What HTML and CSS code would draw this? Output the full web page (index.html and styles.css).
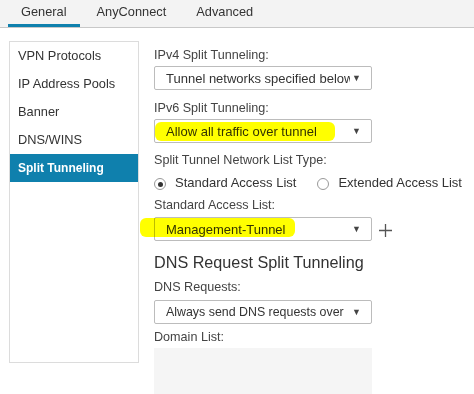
FILE: index.html
```html
<!DOCTYPE html>
<html>
<head>
<meta charset="utf-8">
<link rel="stylesheet" href="styles.css">
</head>
<body>
<div class="tabs">
  <div class="tab active">General</div>
  <div class="tab">AnyConnect</div>
  <div class="tab">Advanced</div>
</div>
<div class="main">
  <ul class="side">
    <li>VPN Protocols</li>
    <li>IP Address Pools</li>
    <li>Banner</li>
    <li>DNS/WINS</li>
    <li class="sel">Split Tunneling</li>
  </ul>
  <div class="content">
    <div class="label l1">IPv4 Split Tunneling:</div>
    <div class="select"><span class="val">Tunnel networks specified below</span><span class="arrow">&#9660;</span></div>
    <div class="label l2">IPv6 Split Tunneling:</div>
    <div class="select"><span class="val">Allow all traffic over tunnel</span><span class="arrow">&#9660;</span></div>
    <div class="label l3">Split Tunnel Network List Type:</div>
    <div class="radios">
      <span class="radio on"></span><span class="rlabel">Standard Access List</span>
      <span class="radio"></span><span class="rlabel">Extended Access List</span>
    </div>
    <div class="label l4">Standard Access List:</div>
    <div class="row">
      <div class="select"><span class="val">Management-Tunnel</span><span class="arrow">&#9660;</span></div>
      <svg class="plus" width="15" height="15" viewBox="0 0 15 15"><path d="M7.5 1v13M1 7.5h13" stroke="#555" stroke-width="1.3" fill="none"/></svg>
    </div>
    <div class="heading">DNS Request Split Tunneling</div>
    <div class="label l5">DNS Requests:</div>
    <div class="select small"><span class="val">Always send DNS requests over</span><span class="arrow">&#9660;</span></div>
    <div class="label l6">Domain List:</div>
    <div class="textarea"></div>
    <span class="mark m1"></span>
    <span class="mark m2"></span>
  </div>
</div>
</body>
</html>
```
FILE: styles.css
```css
html, body { margin: 0; padding: 0; background: #fff; }
body {
  font-family: "Liberation Sans", Arial, sans-serif;
  font-size: 12.8px;
  color: #333;
  width: 474px;
  height: 394px;
  overflow: hidden;
}
.tabs {
  display: flex;
  height: 28px;
  background: #f3f3f3;
  border-bottom: 1px solid #c8c8c8;
  padding-left: 8px;
  box-sizing: border-box;
}
.tab {
  padding: 0 13px;
  line-height: 24px;
  color: #333;
  margin-right: 4px;
  border-bottom: 3px solid transparent;
}
.tab.active { border-bottom-color: #0f80ad; }
.main {
  display: flex;
  padding: 13px 0 0 9px;
  gap: 15px;
}
.side {
  list-style: none;
  margin: 0;
  padding: 0;
  width: 128px;
  height: 320px;
  border: 1px solid #dcdcdc;
  flex: none;
}
.side li {
  height: 28px;
  line-height: 28px;
  padding-left: 8px;
  color: #333;
}
.side li.sel {
  background: #0f80ad;
  color: #fff;
  font-weight: bold;
  font-size: 12px;
}
.content {
  position: relative;
  display: flex;
  flex-direction: column;
  padding-top: 6px;
  flex: 1;
}
.label { line-height: 16px; color: #444; margin-bottom: 3px; font-size: 12.6px; }
.l2 { margin-top: 10px; }
.l3 { margin-top: 9px; }
.l4 { margin-top: 5px; margin-bottom: 4px; }
.l5 { margin-top: 7px; margin-bottom: 5px; }
.l6 { margin-top: 5px; margin-bottom: 0; }
.select {
  width: 218px;
  height: 24px;
  box-sizing: border-box;
  border: 1px solid #bcbcbc;
  border-radius: 2px;
  display: flex;
  align-items: center;
  padding: 0 11px;
  background: #fff;
  color: #333;
  font-size: 13px;
}
.select.small { font-size: 12.4px; }
.val {
  flex: 1;
  white-space: nowrap;
  overflow: hidden;
}
.arrow {
  font-size: 9px;
  color: #444;
  margin-left: 2px;
  width: 8px;
}
.radios {
  display: flex;
  align-items: center;
  height: 20px;
  margin-top: 1px;
  white-space: nowrap;
  font-size: 13px;
}
.radio {
  flex: none;
  width: 12px;
  height: 12px;
  box-sizing: border-box;
  border: 1px solid #999;
  border-radius: 50%;
  margin: 4px 9px 0 0;
  position: relative;
  background: #fff;
}
.radio.on::after {
  content: "";
  position: absolute;
  left: 2.5px; top: 2.5px;
  width: 5px; height: 5px;
  border-radius: 50%;
  background: #333;
}
.rlabel { margin-right: 21px; flex: none; }
.row { display: flex; align-items: center; gap: 6px; }
.plus { margin-top: 2px; }
.heading {
  font-size: 16.2px;
  line-height: 20px;
  margin-top: 11px;
  color: #333;
}
.textarea {
  width: 218px;
  height: 60px;
  background: #f5f5f5;
  margin-top: 3px;
}
.mark {
  position: absolute;
  background: #ffff00;
  mix-blend-mode: multiply;
  border-radius: 6px;
}
.m1 { left: 1px; top: 81px; width: 180px; height: 19px; }
.m2 { left: -14px; top: 177px; width: 155px; height: 19px; }
```
